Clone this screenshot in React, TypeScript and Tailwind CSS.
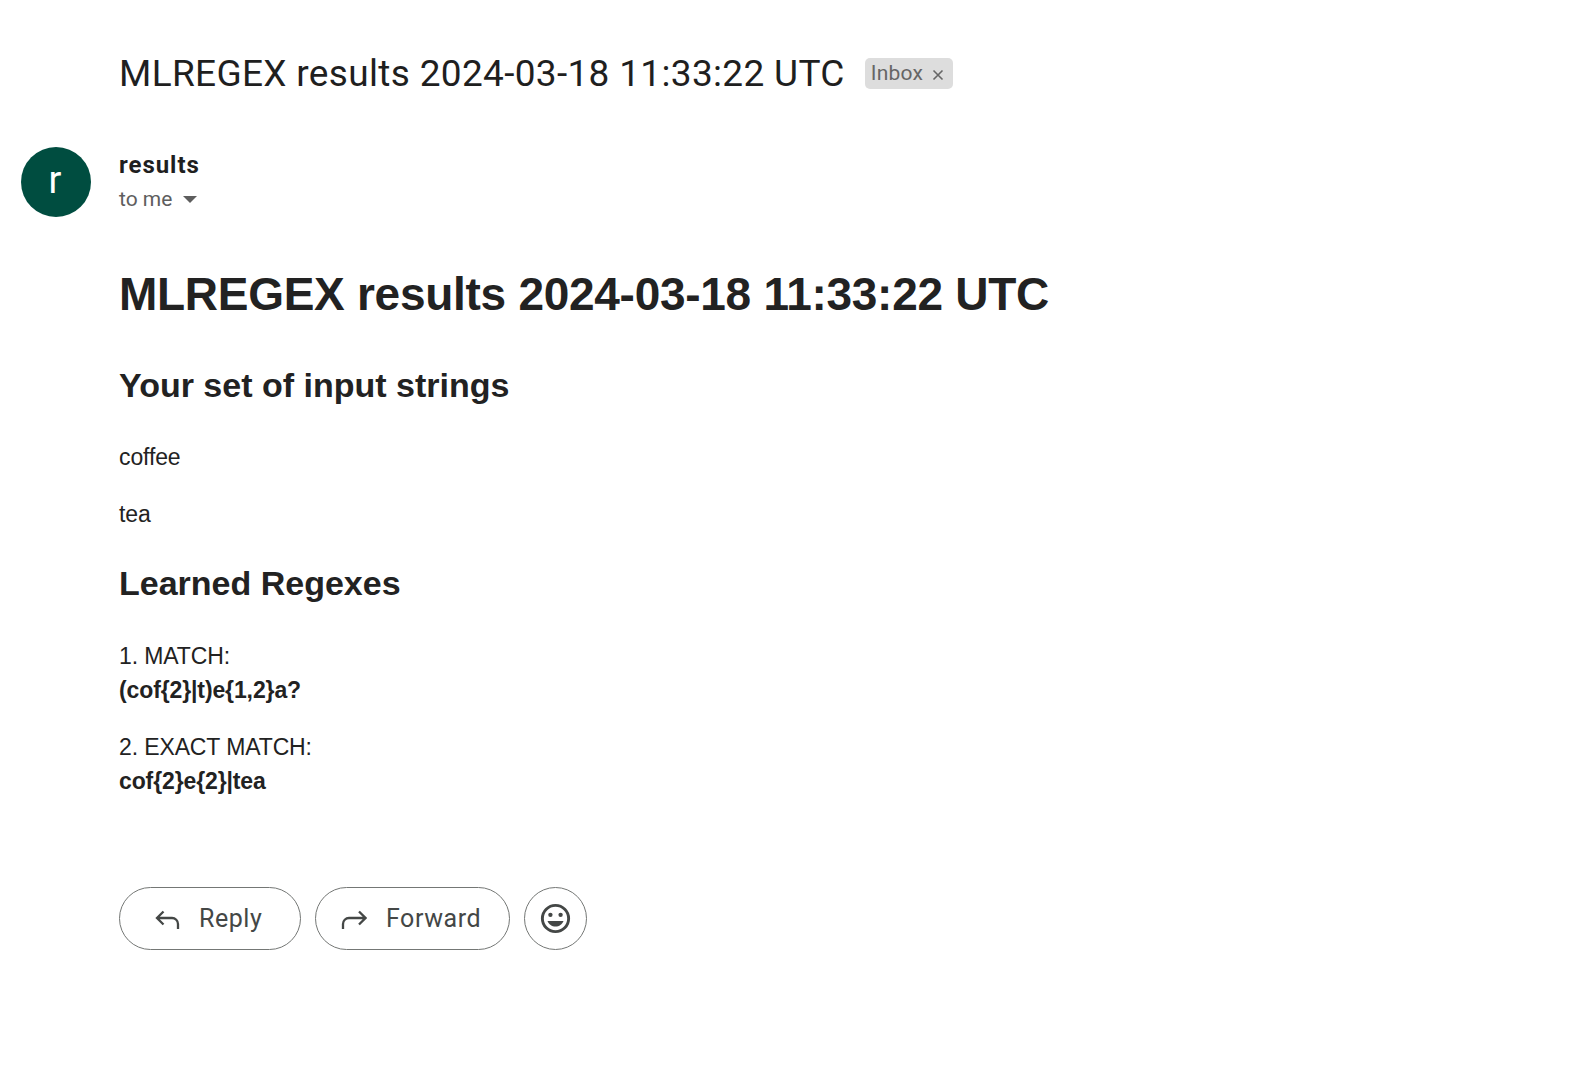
export default function App() {
  return (
    <div className="min-h-[1086px] bg-white text-[#222222] font-['Liberation_Sans',sans-serif] pt-[50px]">
      <div className="pl-[119px] flex items-center h-[46px]">
        <h1 className="font-['Roboto',sans-serif] text-[37px] leading-[46px] text-[#1f1f1f] tracking-[0.33px] pt-[2px]">MLREGEX results 2024-03-18 11:33:22 UTC</h1>
        <span className="ml-[20px] h-[31px] w-[88px] rounded-[5px] bg-[#dddddd] text-[#666666] font-['Roboto',sans-serif] text-[21px] tracking-[0.2px] flex items-center pl-[6px]">
          <span className="pt-[1px]">Inbox</span>
          <svg className="ml-[9px] mt-[3px]" width="12" height="12" viewBox="0 0 12 12"><path d="M1.5 1.5l9 9M10.5 1.5l-9 9" stroke="#666666" strokeWidth="1.6" /></svg>
        </span>
      </div>
      <div className="flex mt-[51px] pl-[21px]">
        <div className="w-[70px] h-[70px] rounded-full bg-[#004d40] text-white flex items-center justify-center font-['Roboto',sans-serif] text-[38px] pb-[4px] pr-[2px]">r</div>
        <div className="ml-[28px] pt-[3px]">
          <div className="font-['Roboto',sans-serif] font-bold text-[24px] leading-[30px] tracking-[0.95px] text-[#1f1f1f]">results</div>
          <div className="font-['Roboto',sans-serif] text-[21px] leading-[26px] mt-[6px] text-[#5e5e5e] flex items-center">
            to me
            <svg className="ml-[11px] mt-[2px]" width="14" height="8" viewBox="0 0 14 8"><path d="M0 0h14L7 7z" fill="#5e5e5e" /></svg>
          </div>
        </div>
      </div>
      <div className="pl-[119px] mt-[49px]">
        <h1 className="font-bold text-[46px] tracking-[-0.28px] leading-[56px]">MLREGEX results 2024-03-18 11:33:22 UTC</h1>
        <h2 className="font-bold text-[34px] leading-[42px] mt-[42px]">Your set of input strings</h2>
        <p className="text-[23px] tracking-[-0.12px] leading-[28px] mt-[37px]">coffee</p>
        <p className="text-[23px] tracking-[-0.12px] leading-[28px] mt-[29px]">tea</p>
        <h2 className="font-bold text-[34px] leading-[42px] mt-[34px]">Learned Regexes</h2>
        <p className="text-[23px] tracking-[-0.12px] leading-[34px] mt-[35px]">1. MATCH:<br /><b>(cof{"{2}"}|t)e{"{1,2}"}a?</b></p>
        <p className="text-[23px] tracking-[-0.12px] leading-[34px] mt-[23px]">2. EXACT MATCH:<br /><b>cof{"{2}"}e{"{2}"}|tea</b></p>
      </div>
      <div className="pl-[119px] mt-[89px] flex gap-[14px] font-['Roboto',sans-serif] text-[25px] tracking-[0.55px] text-[#444746]">
        <button className="h-[63px] w-[182px] rounded-full border border-[#747775] flex items-center pl-[34px]">
          <svg width="28" height="28" viewBox="0 0 28 28" fill="none" stroke="#444746" strokeWidth="2.3"><path d="M9.5 6.5L3 13l6.5 6.5M3 13h15a6 6 0 0 1 6 6v5" /></svg>
          <span className="ml-[17px]">Reply</span>
        </button>
        <button className="h-[63px] w-[195px] rounded-full border border-[#747775] flex items-center pl-[23px]">
          <svg width="28" height="28" viewBox="0 0 28 28" fill="none" stroke="#444746" strokeWidth="2.3"><path d="M20 6.5l6.5 6.5-6.5 6.5M26.5 13H10a6 6 0 0 0-6 6v5" /></svg>
          <span className="ml-[19px]">Forward</span>
        </button>
        <button className="h-[63px] w-[63px] rounded-full border border-[#747775] flex items-center justify-center pr-[1px]">
          <svg width="35" height="35" viewBox="0 0 24 24" fill="#444746"><path d="M12 2a10 10 0 1 0 0 20 10 10 0 0 0 0-20zm0 18a8 8 0 1 1 0-16 8 8 0 0 1 0 16z" /><circle cx="8.5" cy="9.5" r="1.5" /><circle cx="15.5" cy="9.5" r="1.5" /><path d="M12 17.5c2.5 0 4.6-1.6 5.5-3.8h-11c.9 2.2 3 3.8 5.5 3.8z" /></svg>
        </button>
      </div>
    </div>
  );
}
